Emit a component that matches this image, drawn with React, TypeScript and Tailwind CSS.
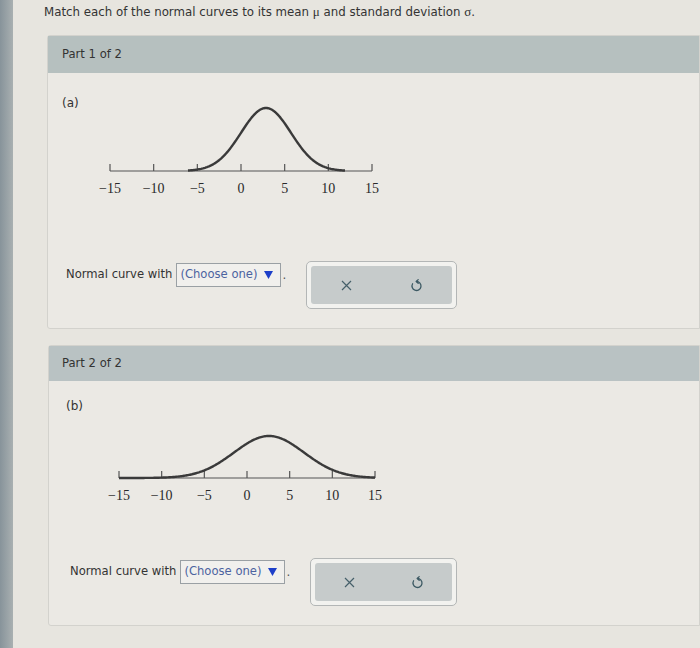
const AXIS_LABELS = ["−15", "−10", "−5", "0", "5", "10", "15"];

function gaussPath(x0: number, x1: number, mu: number, sigma: number, base: number, height: number) {
  const pts: string[] = [];
  for (let x = x0; x <= x1; x += 1) {
    const y = base - height * Math.exp(-((x - mu) ** 2) / (2 * sigma * sigma));
    pts.push(`${x === x0 ? "M" : "L"}${x.toFixed(1)},${y.toFixed(2)}`);
  }
  return pts.join(" ");
}

type PlotProps = {
  left: number;
  right: number;
  base: number;
  mu: number;
  sigma: number;
  height: number;
  from: number;
  to: number;
};

function NormalPlot({ left, right, base, mu, sigma, height, from, to }: PlotProps) {
  const step = (right - left) / 6;
  return (
    <svg width="330" height="100" className="block">
      <line x1={left} y1={base} x2={right} y2={base} stroke="#555" strokeWidth="1.2" />
      {AXIS_LABELS.map((l, i) => {
        const x = left + i * step;
        return (
          <g key={i}>
            <line x1={x} y1={base} x2={x} y2={base - 7} stroke="#555" strokeWidth="1.2" />
            <text
              x={x}
              y={base + 22}
              textAnchor="middle"
              fontSize="14"
              fill="#2a2a2a"
              fontFamily="'Liberation Serif', serif"
            >
              {l}
            </text>
          </g>
        );
      })}
      <path d={gaussPath(from, to, mu, sigma, base, height)} fill="none" stroke="#3a3a3a" strokeWidth="2.4" />
    </svg>
  );
}

// circular "undo" arrow, open at the upper left, arrowhead at the top
function UndoIcon() {
  return (
    <svg width="13" height="14" viewBox="0 0 13 14" fill="none" stroke="#3d5a64" strokeWidth="1.3" strokeLinecap="round" strokeLinejoin="round">
      <path d="M6.5 3.5 A4.5 4.5 0 1 1 2.6 5.75" />
      <path d="M8.2 1.6 L6.2 3.5 L8.2 5.3" />
    </svg>
  );
}

function AnswerRow({ boxWidth }: { boxWidth: string }) {
  return (
    <div className="flex items-start pl-[4px]">
      <div className="flex items-center h-6 mt-[2px]">
        <span className="text-[11.6px] text-[#333]">Normal curve with</span>
        <div className="ml-[4px] flex items-center h-6 w-[105px] border border-[#9aa0a4] bg-[#f1f0ed] pl-[3px] pr-[7px]">
          <span className="text-[11.6px] text-[#4c63a0]">(Choose one)</span>
          <svg className="ml-auto" width="9" height="8" viewBox="0 0 9 8">
            <path d="M0 0 H9 L4.5 8 Z" fill="#1d3fc9" />
          </svg>
        </div>
        <span className="text-[12px] text-[#555] ml-[1px]">.</span>
      </div>
      <div className={`ml-[20px] ${boxWidth} h-12 rounded-[5px] border border-[#b3b6b6] bg-[#f2f2ef] p-[4px]`}>
        <div className="flex h-full rounded-[3px] bg-[#c6cbcb]">
          <div className="flex-1 flex items-center justify-center">
            <svg width="11" height="11" viewBox="0 0 11 11" stroke="#46606a" strokeWidth="1.2">
              <path d="M1 1 L10 10 M10 1 L1 10" />
            </svg>
          </div>
          <div className="flex-1 flex items-center justify-center">
            <UndoIcon />
          </div>
        </div>
      </div>
    </div>
  );
}

export default function App() {
  return (
    <div
      className="flex w-[700px] h-[648px] overflow-hidden bg-[#e7e5df] text-[#333]"
      style={{ fontFamily: "'DejaVu Sans', Verdana, sans-serif" }}
    >
      <div className="w-[13px] shrink-0 bg-gradient-to-r from-[#87939a] to-[#a9b0b1]" />
      <div className="flex-1 flex flex-col">
        <div className="pl-[31px] pt-[2px] h-[35px] text-[11.8px] text-[#333]">
          Match each of the normal curves to its mean <span className="font-['Liberation_Serif',serif] text-[13px]">μ</span> and standard deviation <span className="font-['Liberation_Serif',serif] text-[13px]">σ</span>.
        </div>

        <div className="ml-[34px] border border-[#d3d2cd] rounded-l-[3px] bg-[#ebe9e4]">
          <div className="h-[37px] bg-[#b6c0bf] flex items-center pl-[14px] text-[11.6px] text-[#333]">Part 1 of 2</div>
          <div className="flex flex-col pl-[14px] pt-[22px] pb-[19px]">
            <div className="h-4 text-[12px] leading-4">(a)</div>
            <div className="-mt-[10px]">
              <NormalPlot left={48} right={310} base={70} mu={204} sigma={25} height={63} from={126} to={283} />
            </div>
            <div className="mt-[60px]">
              <AnswerRow boxWidth="w-[151px]" />
            </div>
          </div>
        </div>

        <div className="ml-[35px] mt-[16px] border border-[#d3d2cd] rounded-l-[3px] bg-[#ebe9e4]">
          <div className="h-[35px] bg-[#b9c2c3] flex items-center pl-[13px] text-[11.6px] text-[#333]">Part 2 of 2</div>
          <div className="flex flex-col pl-[17px] pt-[17px] pb-[19px]">
            <div className="h-4 text-[12px] leading-4">(b)</div>
            <div>
              <NormalPlot left={53} right={309} base={64} mu={203} sigma={35} height={42} from={53} to={309} />
            </div>
            <div className="mt-[44px]">
              <AnswerRow boxWidth="w-[147px]" />
            </div>
          </div>
        </div>
      </div>
    </div>
  );
}
